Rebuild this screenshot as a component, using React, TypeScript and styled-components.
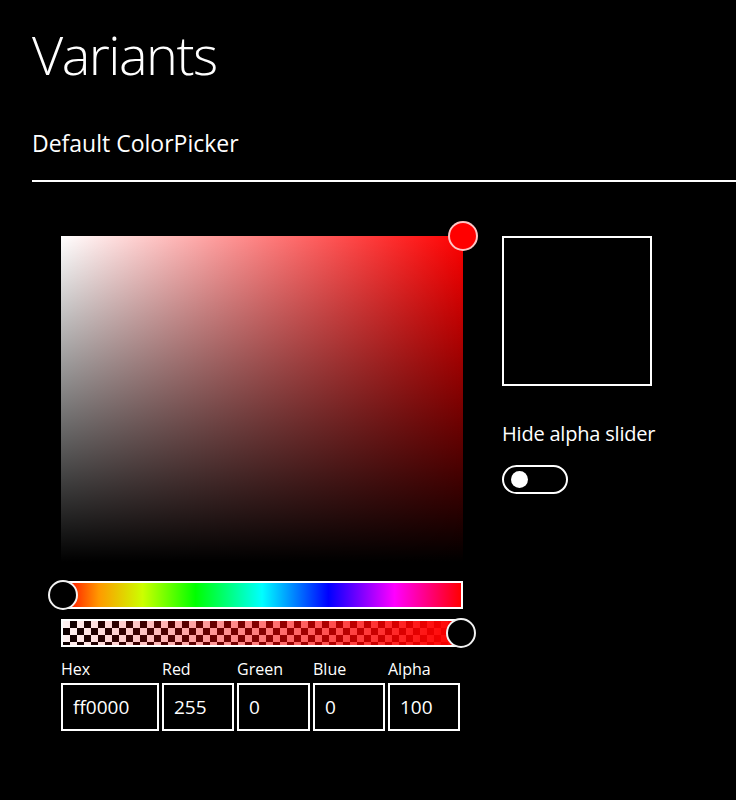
import styled, { createGlobalStyle } from "styled-components";

const GlobalStyle = createGlobalStyle`
  html, body {
    margin: 0;
    background: #000;
    color: #fff;
    font-family: "Open Sans", "Noto Sans", sans-serif;
  }
  * { box-sizing: border-box; }
`;

const Page = styled.div`
  padding: 14px 0 40px 32px;
  min-height: 800px;
  background: #000;
`;

const Title = styled.h1`
  margin: 0;
  font-size: 54px;
  font-weight: 300;
  line-height: 80px;
  letter-spacing: -1.5px;
`;

const SectionHeader = styled.h2`
  margin: 33px 0 0;
  padding-bottom: 21px;
  font-size: 23px;
  font-weight: 400;
  line-height: 32px;
  border-bottom: 2px solid #fff;
`;

const Example = styled.div`
  display: flex;
  gap: 39px;
  padding: 54px 0 0 29px;
`;

const PickerColumn = styled.div`
  display: flex;
  flex-direction: column;
  width: 402px;
`;

const Spectrum = styled.div`
  position: relative;
  height: 336px;
  background: linear-gradient(to top, #000 3%, rgba(0, 0, 0, 0)),
    linear-gradient(to right, #fff, #f00);
`;

const Thumb = styled.div<{ $fill: string; $ring: string }>`
  position: absolute;
  width: 30px;
  height: 30px;
  border-radius: 50%;
  background: ${(p) => p.$fill};
  border: 2px solid ${(p) => p.$ring};
  transform: translate(-50%, -50%);
`;

const Track = styled.div`
  position: relative;
  height: 28px;
  border: 2px solid #fff;
`;

const HueTrack = styled(Track)`
  margin-top: 9px;
  background: linear-gradient(
    to right,
    #f00 0%,
    #f90 9%,
    #cf0 20%,
    #0f0 33.3%,
    #0ff 50%,
    #00f 66.7%,
    #f0f 83.3%,
    #f00 100%
  );
`;

const AlphaTrack = styled(Track)`
  margin-top: 10px;
  background-color: #fff;
  background-image: linear-gradient(to right, rgba(255, 0, 0, 0.05), #f00),
    conic-gradient(#000 25%, #fff 0 50%, #000 0 75%, #fff 0);
  background-size: 100% 100%, 14px 14px;
`;

const Fields = styled.div`
  display: flex;
  gap: 3px;
  margin-top: 10px;
`;

const Field = styled.label<{ $w: number }>`
  display: flex;
  flex-direction: column;
  width: ${(p) => p.$w}px;
  font-size: 16px;
  line-height: 24px;
`;

const FieldBox = styled.div`
  height: 48px;
  margin-top: 2px;
  border: 2px solid #fff;
  padding: 0 10px;
  display: flex;
  align-items: center;
  font-size: 19px;
`;

const SidePanel = styled.div`
  display: flex;
  flex-direction: column;
`;

const Preview = styled.div`
  width: 150px;
  height: 150px;
  border: 2px solid #fff;
  background: #000;
`;

const OptionLabel = styled.div`
  margin-top: 35px;
  font-size: 20px;
  line-height: 26px;
  letter-spacing: -0.2px;
`;

const Toggle = styled.div`
  margin-top: 18px;
  width: 66px;
  height: 29px;
  border: 2px solid #fff;
  border-radius: 15px;
  display: flex;
  align-items: center;
  padding-left: 7px;
`;

const Knob = styled.span`
  width: 17px;
  height: 17px;
  border-radius: 50%;
  background: #fff;
`;

const fields = [
  { label: "Hex", value: "ff0000", w: 98 },
  { label: "Red", value: "255", w: 72 },
  { label: "Green", value: "0", w: 73 },
  { label: "Blue", value: "0", w: 72 },
  { label: "Alpha", value: "100", w: 72 },
];

export default function App() {
  return (
    <Page>
      <GlobalStyle />
      <Title>Variants</Title>
      <SectionHeader>Default ColorPicker</SectionHeader>
      <Example>
        <PickerColumn>
          <Spectrum>
            <Thumb $fill="#f00" $ring="rgba(255,230,230,0.85)" style={{ left: "100%", top: 0 }} />
          </Spectrum>
          <HueTrack>
            <Thumb $fill="#000" $ring="#f2f2f2" style={{ left: 0, top: "50%" }} />
          </HueTrack>
          <AlphaTrack>
            <Thumb $fill="#000" $ring="#f2f2f2" style={{ left: "100%", top: "50%" }} />
          </AlphaTrack>
          <Fields>
            {fields.map((f) => (
              <Field key={f.label} $w={f.w}>
                {f.label}
                <FieldBox>{f.value}</FieldBox>
              </Field>
            ))}
          </Fields>
        </PickerColumn>
        <SidePanel>
          <Preview />
          <OptionLabel>Hide alpha slider</OptionLabel>
          <Toggle>
            <Knob />
          </Toggle>
        </SidePanel>
      </Example>
    </Page>
  );
}
